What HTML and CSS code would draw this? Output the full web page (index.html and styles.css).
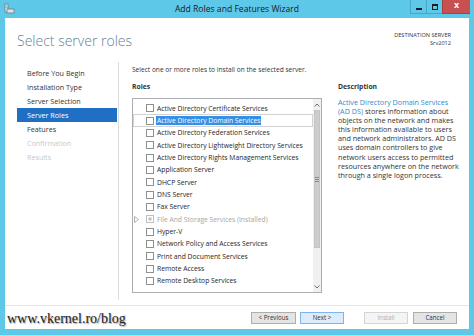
FILE: index.html
```html
<!DOCTYPE html>
<html>
<head>
<meta charset="utf-8">
<title>Add Roles and Features Wizard</title>
<link rel="stylesheet" href="styles.css">
</head>
<body>
<div class="window">
  <div class="titlebar">
    <svg class="app-icon" width="11" height="11" viewBox="0 0 11 11">
      <rect x="1" y="1" width="3" height="8" fill="#e8eef2" stroke="#6b7b88" stroke-width="0.8"/>
      <rect x="3" y="6" width="7" height="4" fill="#d9e2e8" stroke="#6b7b88" stroke-width="0.8"/>
      <line x1="1.8" y1="3" x2="3.2" y2="3" stroke="#6b7b88" stroke-width="0.6"/>
      <line x1="1.8" y1="4.5" x2="3.2" y2="4.5" stroke="#6b7b88" stroke-width="0.6"/>
    </svg>
    <div class="title">Add Roles and Features Wizard</div>
    <div class="controls">
      <div class="ctl ctl-min"><span class="glyph-min"></span></div>
      <div class="ctl ctl-max"><span class="glyph-max"></span></div>
      <div class="ctl ctl-close">x</div>
    </div>
  </div>

  <div class="client">
    <div class="header">
      <h1 class="page-title">Select server roles</h1>
      <div class="dest">
        <div>DESTINATION SERVER</div>
        <div>Srv2012</div>
      </div>
    </div>

    <div class="body">
      <ul class="nav">
        <li class="nav-item">Before You Begin</li>
        <li class="nav-item">Installation Type</li>
        <li class="nav-item">Server Selection</li>
        <li class="nav-item is-active">Server Roles</li>
        <li class="nav-item">Features</li>
        <li class="nav-item is-disabled">Confirmation</li>
        <li class="nav-item is-disabled">Results</li>
      </ul>

      <div class="main">
        <p class="intro">Select one or more roles to install on the selected server.</p>
        <div class="cols">
          <div class="roles">
            <h2 class="heading">Roles</h2>
            <div class="listbox">
              <ul class="rows">
                <li class="row"><span class="arrow"></span><span class="cb"></span><span class="label">Active Directory Certificate Services</span></li>
                <li class="row is-selected"><span class="arrow"></span><span class="cb"></span><span class="label">Active Directory Domain Services</span></li>
                <li class="row"><span class="arrow"></span><span class="cb"></span><span class="label">Active Directory Federation Services</span></li>
                <li class="row"><span class="arrow"></span><span class="cb"></span><span class="label">Active Directory Lightweight Directory Services</span></li>
                <li class="row"><span class="arrow"></span><span class="cb"></span><span class="label">Active Directory Rights Management Services</span></li>
                <li class="row"><span class="arrow"></span><span class="cb"></span><span class="label">Application Server</span></li>
                <li class="row"><span class="arrow"></span><span class="cb"></span><span class="label">DHCP Server</span></li>
                <li class="row"><span class="arrow"></span><span class="cb"></span><span class="label">DNS Server</span></li>
                <li class="row"><span class="arrow"></span><span class="cb"></span><span class="label">Fax Server</span></li>
                <li class="row is-installed"><span class="arrow"><svg width="5" height="7" viewBox="0 0 5 7"><path d="M0.5 0.5 L4.5 3.5 L0.5 6.5 Z" fill="none" stroke="#a8a8a8" stroke-width="0.9"/></svg></span><span class="cb"></span><span class="label">File And Storage Services (Installed)</span></li>
                <li class="row"><span class="arrow"></span><span class="cb"></span><span class="label">Hyper-V</span></li>
                <li class="row"><span class="arrow"></span><span class="cb"></span><span class="label">Network Policy and Access Services</span></li>
                <li class="row"><span class="arrow"></span><span class="cb"></span><span class="label">Print and Document Services</span></li>
                <li class="row"><span class="arrow"></span><span class="cb"></span><span class="label">Remote Access</span></li>
                <li class="row"><span class="arrow"></span><span class="cb"></span><span class="label">Remote Desktop Services</span></li>
              </ul>
              <div class="scrollbar">
                <div class="sb-btn">
                  <svg width="6" height="4" viewBox="0 0 6 4"><path d="M0.5 3.5 L3 1 L5.5 3.5" fill="none" stroke="#606060" stroke-width="0.9"/></svg>
                </div>
                <div class="sb-track">
                  <div class="sb-thumb"><span class="grip"></span></div>
                </div>
                <div class="sb-btn">
                  <svg width="6" height="4" viewBox="0 0 6 4"><path d="M0.5 0.5 L3 3 L5.5 0.5" fill="none" stroke="#606060" stroke-width="0.9"/></svg>
                </div>
              </div>
            </div>
          </div>
          <div class="desc">
            <h2 class="heading">Description</h2>
            <p class="desc-text"><span class="link">Active Directory Domain Services<br>(AD DS)</span> stores information about<br>objects on the network and makes<br>this information available to users<br>and network administrators. AD DS<br>uses domain controllers to give<br>network users access to permitted<br>resources anywhere on the network<br>through a single logon process.</p>
          </div>
        </div>
      </div>
    </div>

    <div class="footer">
      <span class="watermark">www.vkernel.ro/blog</span>
      <button class="btn">&lt; Previous</button>
      <button class="btn btn-default">Next &gt;</button>
      <button class="btn btn-disabled">Install</button>
      <button class="btn">Cancel</button>
    </div>
  </div>
</div>
</body>
</html>
```

FILE: styles.css
```css
* { box-sizing: border-box; }
html, body { margin: 0; padding: 0; }
body {
  width: 474px;
  height: 335px;
  overflow: hidden;
  font-family: "Open Sans", "Noto Sans", sans-serif;
  color: #222;
}
ul { list-style: none; margin: 0; padding: 0; }
p, h1, h2 { margin: 0; }

.window {
  width: 474px;
  height: 335px;
  background: #5ec8e8;
  display: flex;
  flex-direction: column;
}

/* title bar */
.titlebar {
  height: 18px;
  display: grid;
  grid-template-columns: 1fr auto 1fr;
  align-items: start;
}
.app-icon { margin: 3px 0 0 4px; justify-self: start; }
.title {
  font-size: 8.6px;
  line-height: 18px;
  color: #1b1b1b;
}
.controls {
  justify-self: end;
  display: flex;
  margin-right: 4px;
  height: 14px;
}
.ctl {
  height: 14px;
  display: flex;
  align-items: center;
  justify-content: center;
  border-left: 1px solid #4aa6c4;
  border-bottom: 1px solid #4aa6c4;
}
.ctl-min { width: 16px; }
.ctl-max { width: 16px; }
.ctl-close {
  width: 28px;
  background: #c75050;
  border-color: #a84040;
  color: #fff;
  font-family: "DejaVu Sans", sans-serif;
  font-weight: bold;
  font-size: 8px;
  line-height: 1;
  padding-bottom: 1px;
}
.glyph-min { width: 6px; height: 2px; background: #1c1c1c; margin-top: 4px; }
.glyph-max { width: 6px; height: 6px; border: 1px solid #1c1c1c; border-top-width: 2px; }

/* client area */
.client {
  flex: 1;
  margin: 0 5px 6px 5px;
  background: #fff;
  display: flex;
  flex-direction: column;
}

.header {
  height: 44px;
  display: flex;
  justify-content: space-between;
  align-items: flex-start;
  padding: 0 18px 0 12px;
}
.page-title {
  margin-top: 14px;
  font-size: 14px;
  line-height: 18px;
  font-weight: 300;
  color: #5f7f99;
}
.dest {
  margin-top: 13px;
  text-align: right;
  font-size: 5.6px;
  line-height: 8px;
  color: #333;
}

.body {
  height: 243px;
  display: flex;
}
.nav {
  width: 114px;
  border-right: 1px solid #dcdcdc;
  padding-top: 4px;
  margin: 0 0 5px 0;
}
.nav-item {
  height: 14px;
  line-height: 14px;
  margin: 0 1px 0 12px;
  padding-left: 10px;
  font-size: 7.2px;
  color: #333;
  white-space: nowrap;
}
.nav-item.is-active { background: #1f6fc4; color: #fff; }
.nav-item.is-disabled { color: #c8c8c8; }

.main {
  flex: 1;
  padding: 2px 6px 0 13px;
}
.intro {
  font-size: 6.6px;
  line-height: 12px;
  color: #333;
  white-space: nowrap;
}
.cols {
  margin-top: 5px;
  display: grid;
  grid-template-columns: 190px 1fr;
  column-gap: 16px;
}
.heading {
  font-size: 6.8px;
  line-height: 12px;
  font-weight: bold;
  color: #333;
}

.listbox {
  margin-top: 5px;
  height: 195px;
  border: 1px solid #abadb3;
  display: flex;
  overflow: hidden;
}
.rows {
  flex: 1;
  padding-top: 3px;
  overflow: hidden;
}
.row {
  height: 12.35px;
  display: flex;
  align-items: center;
  padding-left: 1px;
  font-size: 6.75px;
  color: #262626;
  white-space: nowrap;
}
.arrow {
  width: 12px;
  display: flex;
  align-items: center;
}
.cb {
  width: 8px;
  height: 8px;
  border: 1px solid #8e8f8f;
  background: #fff;
  flex: none;
}
.label {
  margin-left: 2px;
  padding: 0 1px;
  line-height: 9px;
}
.row.is-selected { outline: 1px solid #d2d2d2; outline-offset: -1px; }
.row.is-selected .label { background: #3390e6; color: #fff; }
.row.is-installed .label { color: #a6a6a6; }
.row.is-installed .cb {
  border-color: #c0c0c0;
  background: #fff;
  box-shadow: inset 0 0 0 1.5px #fff, inset 0 0 0 4px #bdbdbd;
}

.scrollbar {
  width: 8px;
  background: #f0f0f0;
  display: flex;
  flex-direction: column;
}
.sb-btn {
  height: 11px;
  display: flex;
  align-items: center;
  justify-content: center;
  flex: none;
}
.sb-track { flex: 1; }
.sb-thumb {
  height: 138px;
  margin: 0 1px;
  background: #cdcdcd;
  border: 1px solid #c4c4c4;
  display: flex;
  align-items: center;
  justify-content: center;
}
.grip {
  width: 4px;
  height: 5px;
  border-top: 1px solid #8a8a8a;
  border-bottom: 1px solid #8a8a8a;
  background: linear-gradient(#8a8a8a, #8a8a8a) center / 4px 1px no-repeat;
}

.desc-text {
  margin-top: 5px;
  font-size: 7.2px;
  line-height: 9.1px;
  color: #333;
  white-space: nowrap;
}
.link { color: #3a87cb; }

/* footer */
.footer {
  flex: 1;
  border-top: 1px solid #e3e3e3;
  display: flex;
  align-items: center;
  padding: 0 12px 0 2px;
}
.watermark {
  margin-right: auto;
  align-self: flex-end;
  margin-bottom: 2px;
  font-family: "Liberation Serif", "Times New Roman", serif;
  font-size: 14px;
  line-height: 16px;
  color: #222;
  text-shadow: 1px 1px 1px rgba(0,0,0,0.35);
}
.btn {
  width: 45px;
  height: 12px;
  padding: 0;
  margin: 0;
  font-family: "Open Sans", "Noto Sans", sans-serif;
  font-size: 6.2px;
  line-height: 10px;
  color: #333;
  background: #e4e4e4;
  border: 1px solid #adadad;
  border-radius: 0;
}
.btn + .btn { margin-left: 4px; }
.btn-default { width: 44px; background: #dcecfc; border-color: #7eb4ea; }
.btn-disabled { width: 44px; margin-left: 20px !important; background: #f4f4f4; border-color: #d4d4d4; color: #b0b0b0; }
.btn-disabled + .btn { margin-left: 5px; width: 44px; }
```
